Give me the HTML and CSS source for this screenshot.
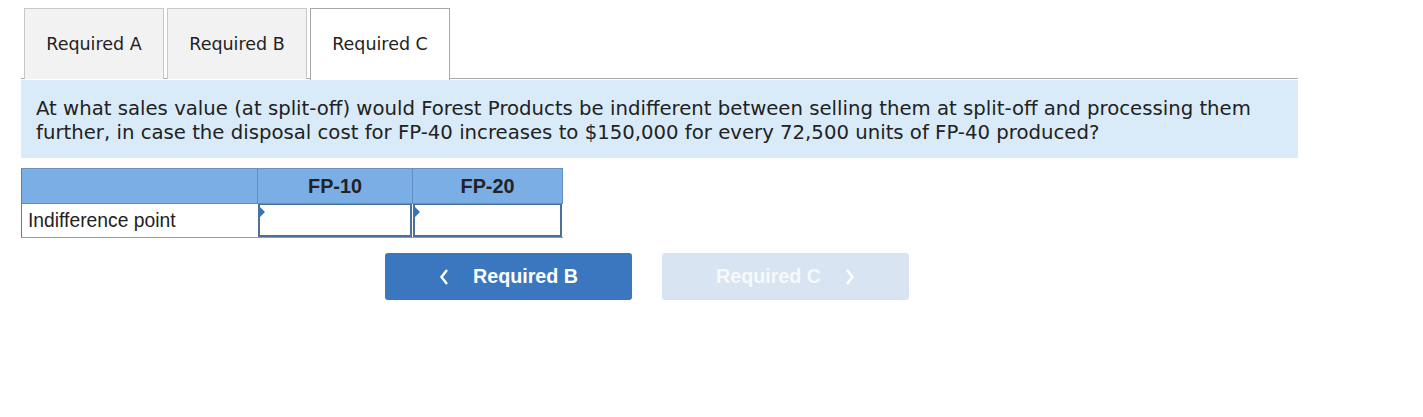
FILE: index.html
```html
<!DOCTYPE HTML>
<html>
<head>
<title>Required C</title>
<link rel="stylesheet" href="styles.css">
</head>
<body>
<div class="page">
	<div class="tabs">
		<div class="tab">Required A</div>
		<div class="tab">Required B</div>
		<div class="tab active">Required C</div>
	</div>
	<div class="question">
		At what sales value (at split-off) would Forest Products be indifferent between selling them at split-off and processing them further, in case the disposal cost for FP-40 increases to $150,000 for every 72,500 units of FP-40 produced?
	</div>
	<table class="answer">
		<tr>
			<th class="label_col"></th>
			<th class="val_col">FP-10</th>
			<th class="val_col">FP-20</th>
		</tr>
		<tr>
			<td class="label">Indifference point</td>
			<td class="input_cell"><div class="input_box"></div></td>
			<td class="input_cell"><div class="input_box"></div></td>
		</tr>
	</table>
	<div class="nav">
		<div class="nav_btn prev">
			<svg width="10" height="18" viewBox="0 0 10 18"><path d="M8 2 L2.5 9 L8 16" fill="none" stroke="#ffffff" stroke-width="2.4"/></svg>
			<span>Required B</span>
		</div>
		<div class="nav_btn next">
			<span>Required C</span>
			<svg width="10" height="18" viewBox="0 0 10 18"><path d="M2 2 L7.5 9 L2 16" fill="none" stroke="#ffffff" stroke-width="2.4"/></svg>
		</div>
	</div>
</div>
</body>
</html>
```

FILE: styles.css
```css
html {
	background-color:#ffffff;
}
body {
	margin:0;
	font-family:"DejaVu Sans", Verdana, sans-serif;
	color:#1a1a1a;
}
.page {
	padding:8px 0 0 21px;
	width:1277px;
}
.tabs {
	display:flex;
	gap:3px;
	padding-left:3px;
	border-bottom:1px solid #a8a8a8;
	height:70px;
}
.tab {
	width:138px;
	height:70px;
	border:1px solid #c8c8c8;
	border-bottom:none;
	background-color:#f2f2f2;
	font-size:17.5px;
	display:flex;
	align-items:center;
	justify-content:center;
	color:#222222;
}
.tab.active {
	background-color:#ffffff;
	border-color:#a8a8a8;
	height:70px;
	padding-bottom:1px;
}
.question {
	margin-top:1px;
	background-color:#d9ebf9;
	padding:17px 15px 13px 15px;
	font-size:19.7px;
	line-height:24px;
	color:#222222;
}
.answer {
	margin-top:10px;
	border-collapse:collapse;
	font-family:"Liberation Sans", Arial, sans-serif;
	font-size:19.3px;
}
.answer th {
	background-color:#7aaee5;
	height:34px;
	padding:0;
	font-weight:bold;
	font-size:19.8px;
	color:#222222;
	border:1px solid #5f8fc4;
	border-top:1px solid #6e90b8;
}
.answer th.label_col {
	width:235px;
	border-left:1px solid #777777;
}
.answer th.val_col {
	width:154px;
}
.answer th.val_col:last-child {
	width:149px;
}
.answer td {
	height:33px;
	padding:0;
	border-bottom:1px solid #9a9a9a;
}
.answer td.label {
	border-left:1px solid #777777;
	padding-left:6px;
	color:#222222;
}
.answer td.input_cell {
	position:relative;
}
.input_box {
	height:30px;
	border:2px solid #4d6f9b;
	border-top-width:1px;
	background-color:#ffffff;
	margin-right:1px;
}
.input_cell::before {
	content:"";
	position:absolute;
	left:1px;
	top:2px;
	border-top:6px solid transparent;
	border-bottom:6px solid transparent;
	border-left:6px solid #3b73b8;
}
.nav {
	display:flex;
	gap:30px;
	margin:15px 0 0 364px;
}
.nav_btn {
	width:247px;
	height:47px;
	border-radius:3px;
	display:flex;
	align-items:center;
	justify-content:center;
	gap:24px;
	font-family:"Liberation Sans", Arial, sans-serif;
	font-weight:bold;
	font-size:19.7px;
	color:#ffffff;
}
.nav_btn.prev {
	background-color:#3a77bf;
}
.nav_btn.next {
	background-color:#d8e4f1;
	color:#f6f9fc;
}
```
